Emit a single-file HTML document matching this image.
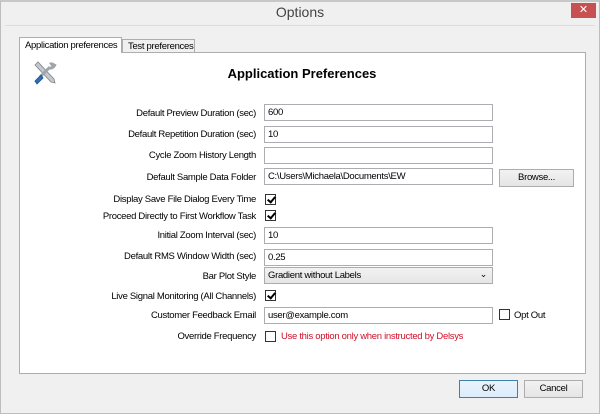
<!DOCTYPE html>
<html><head><style>
*{margin:0;padding:0;box-sizing:border-box}
body{width:600px;height:414px;background:#f0f0f0;font-family:"Liberation Sans",sans-serif;font-size:9.5px;letter-spacing:-0.3px;color:#000;position:relative;overflow:hidden}
.abs{position:absolute;white-space:nowrap}
.win{left:0;top:0;width:600px;height:414px;border:1px solid #bdbdbd;border-top:2px solid #c8c8c8}
.title{left:0;top:4px;width:600px;text-align:center;font-size:14px;color:#444;letter-spacing:0}
.close{left:571px;top:3px;width:25px;height:15px;background:#c75050;color:#fff;text-align:center;font-size:11px;line-height:14px;letter-spacing:0}
.topline{left:5px;top:25px;width:590px;height:1px;background:#dcdcdc}
.panel{left:19px;top:52px;width:567px;height:322px;background:#fff;border:1px solid #adadad}
.tab{border:1px solid #adadad;border-bottom:none;padding:2px 4px 0 5px}
.lbl{right:344px;text-align:right}
.inp{left:264px;width:229px;height:17px;border:1px solid #abadb3;background:#fff;padding:2px 3px}
.cb{left:265px;width:11px;height:11px;border:1px solid #333;background:#fff}
.cb.on::after{content:"";position:absolute;left:3px;top:0px;width:3px;height:6px;border:solid #000;border-width:0 2px 2px 0;transform:rotate(40deg)}
.btn{height:18px;border:1px solid #adadad;background:linear-gradient(#f2f2f2,#e5e5e5);text-align:center;line-height:16px}
</style></head><body>
<div class="abs win"></div>
<div class="abs title">Options</div>
<div class="abs close">✕</div>
<div class="abs topline"></div>
<div class="abs panel"></div>
<div class="abs tab" style="left:19px;top:37px;width:103px;height:16px;background:#fff;z-index:2">Application preferences</div>
<div class="abs tab" style="left:122px;top:39px;width:73px;height:13px;background:#f0f0f0;padding-top:1px">Test preferences</div>
<svg class="abs" style="left:33px;top:61px" width="24" height="24" viewBox="0 0 24 24">
<path d="M2 4 L5 1 L21 18 L22 22 L18 21 Z" fill="#c4c8cc" stroke="#80858a" stroke-width="0.8"/>
<path d="M22 3 a5 5 0 0 1 -6 4 L7 16" stroke="#a0a5aa" stroke-width="3" fill="none"/>
<path d="M16 2 a5 5 0 0 1 6 1 l-3 3 Z" fill="#a0a5aa"/>
<path d="M8 14 L2 20 L4 23 L10 17 Z" fill="#2f6fb5" stroke="#1d4f8a" stroke-width="0.8"/>
</svg>
<div class="abs" style="left:0;width:604px;top:66px;text-align:center;font-weight:bold;font-size:13px;letter-spacing:0">Application Preferences</div>

<div class="abs lbl" style="top:108px">Default Preview Duration (sec)</div>
<div class="abs inp" style="top:104px">600</div>
<div class="abs lbl" style="top:129px">Default Repetition Duration (sec)</div>
<div class="abs inp" style="top:126px">10</div>
<div class="abs lbl" style="top:150px">Cycle Zoom History Length</div>
<div class="abs inp" style="top:147px"></div>
<div class="abs lbl" style="top:172px">Default Sample Data Folder</div>
<div class="abs inp" style="top:168px">C:\Users\Michaela\Documents\EW</div>
<div class="abs btn" style="left:499px;top:169px;width:75px">Browse...</div>
<div class="abs lbl" style="top:194px">Display Save File Dialog Every Time</div>
<div class="abs cb on" style="top:194px"></div>
<div class="abs lbl" style="top:211px">Proceed Directly to First Workflow Task</div>
<div class="abs cb on" style="top:210px"></div>
<div class="abs lbl" style="top:230px">Initial Zoom Interval (sec)</div>
<div class="abs inp" style="top:227px">10</div>
<div class="abs lbl" style="top:251px">Default RMS Window Width (sec)</div>
<div class="abs inp" style="top:249px">0.25</div>
<div class="abs lbl" style="top:271px">Bar Plot Style</div>
<div class="abs inp" style="top:267px;background:linear-gradient(#f2f2f2,#e6e6e6);border-color:#acacac">Gradient without Labels<span style="position:absolute;right:5px;top:1px;font-size:9px">&#8964;</span></div>
<div class="abs lbl" style="top:291px">Live Signal Monitoring (All Channels)</div>
<div class="abs cb on" style="top:290px"></div>
<div class="abs lbl" style="top:310px">Customer Feedback Email</div>
<div class="abs inp" style="top:307px">user@example.com</div>
<div class="abs cb" style="left:499px;top:309px"></div>
<div class="abs" style="left:514px;top:310px">Opt Out</div>
<div class="abs lbl" style="top:331px">Override Frequency</div>
<div class="abs cb" style="top:331px"></div>
<div class="abs" style="left:281px;top:331px;color:#d0102a">Use this option only when instructed by Delsys</div>

<div class="abs btn" style="left:459px;top:380px;width:59px;border-color:#3c7fb1;background:linear-gradient(#eaf3fb,#dcecfc)">OK</div>
<div class="abs btn" style="left:524px;top:380px;width:59px">Cancel</div>
</body></html>
